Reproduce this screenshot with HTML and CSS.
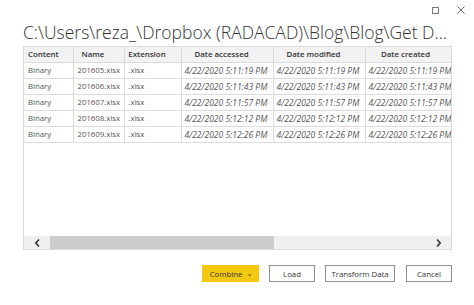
FILE: index.html
```html
<!DOCTYPE html>
<html lang="en">
<head>
    <meta charset="UTF-8">
    <meta name="viewport" content="width=device-width, initial-scale=1.0">
    <title>Navigator - Folder</title>
    <link rel="stylesheet" href="styles.css">
</head>
<body>
    <div class="dialog">
        <div class="window-controls">
            <span class="ctl-max"></span>
            <svg class="ctl-close" width="8" height="8" viewBox="0 0 8 8"><path d="M0.5 0.5 L7.5 7.5 M7.5 0.5 L0.5 7.5" stroke="#666" stroke-width="1"/></svg>
        </div>

        <h1 class="path">C:\Users\reza_\Dropbox (RADACAD)\Blog\Blog\Get D...</h1>

        <div class="grid">
            <div class="grid-body">
                <table>
                    <colgroup>
                        <col class="c-content">
                        <col class="c-name">
                        <col class="c-ext">
                        <col class="c-date">
                        <col class="c-date">
                        <col class="c-date">
                    </colgroup>
                    <thead>
                        <tr>
                            <th class="first">Content</th>
                            <th>Name</th>
                            <th>Extension</th>
                            <th>Date accessed</th>
                            <th>Date modified</th>
                            <th>Date created</th>
                        </tr>
                    </thead>
                    <tbody>
                        <tr>
                            <td>Binary</td><td>201605.xlsx</td><td>.xlsx</td>
                            <td class="date">4/22/2020 5:11:19 PM</td>
                            <td class="date">4/22/2020 5:11:19 PM</td>
                            <td class="date">4/22/2020 5:11:19 PM</td>
                        </tr>
                        <tr>
                            <td>Binary</td><td>201606.xlsx</td><td>.xlsx</td>
                            <td class="date">4/22/2020 5:11:43 PM</td>
                            <td class="date">4/22/2020 5:11:43 PM</td>
                            <td class="date">4/22/2020 5:11:43 PM</td>
                        </tr>
                        <tr>
                            <td>Binary</td><td>201607.xlsx</td><td>.xlsx</td>
                            <td class="date">4/22/2020 5:11:57 PM</td>
                            <td class="date">4/22/2020 5:11:57 PM</td>
                            <td class="date">4/22/2020 5:11:57 PM</td>
                        </tr>
                        <tr>
                            <td>Binary</td><td>201608.xlsx</td><td>.xlsx</td>
                            <td class="date">4/22/2020 5:12:12 PM</td>
                            <td class="date">4/22/2020 5:12:12 PM</td>
                            <td class="date">4/22/2020 5:12:12 PM</td>
                        </tr>
                        <tr>
                            <td>Binary</td><td>201609.xlsx</td><td>.xlsx</td>
                            <td class="date">4/22/2020 5:12:26 PM</td>
                            <td class="date">4/22/2020 5:12:26 PM</td>
                            <td class="date">4/22/2020 5:12:26 PM</td>
                        </tr>
                    </tbody>
                </table>
            </div>

            <div class="hscroll">
                <span class="arrow">
                    <svg width="7" height="8" viewBox="0 0 7 8"><path d="M5 0.5 L1.8 4 L5 7.5" fill="none" stroke="#333" stroke-width="1.6"/></svg>
                </span>
                <div class="track"><div class="thumb"></div></div>
                <span class="arrow">
                    <svg width="7" height="8" viewBox="0 0 7 8"><path d="M2 0.5 L5.2 4 L2 7.5" fill="none" stroke="#333" stroke-width="1.6"/></svg>
                </span>
            </div>
        </div>

        <div class="actions">
            <button class="btn primary">Combine <span class="caret">&#9662;</span></button>
            <button class="btn">Load</button>
            <button class="btn wide">Transform Data</button>
            <button class="btn">Cancel</button>
        </div>
    </div>
</body>
</html>
```

FILE: styles.css
```css
* { margin: 0; padding: 0; box-sizing: border-box; }
body {
    font-family: "Open Sans", "Noto Sans", sans-serif;
    background: white; color: #333;
}
.dialog { width: 474px; height: 305px; padding: 6px 0 0 23px; }

.window-controls {
    display: flex; justify-content: flex-end; align-items: center;
    gap: 18px; height: 8px; padding-right: 9px;
}
.ctl-max { width: 7px; height: 7px; border: 1px solid #777; }
.ctl-close { display: block; }

.path {
    font-size: 17.5px; font-weight: 300; color: #333;
    white-space: nowrap; width: 430px; overflow: hidden;
    line-height: 22px; margin-top: 7px;
}

.grid {
    width: 429px; height: 204px; margin-top: 3px;
    border: 1px solid #dadada;
    display: flex; flex-direction: column;
}
.grid-body { flex: 1; overflow: hidden; }

table { border-collapse: collapse; table-layout: fixed; width: 432px; }
.c-content { width: 49px; }
.c-name { width: 51px; }
.c-ext { width: 57px; }
.c-date { width: 92px; }

th, td {
    white-space: nowrap; overflow: hidden;
    border-right: 1px solid #dcdcdc; border-bottom: 1px solid #dcdcdc;
}
th {
    height: 15px; background: #f2f2f2; font-weight: 600; font-size: 7.9px;
    text-align: center; padding-right: 11px; color: #333;
}
th.first { text-align: left; padding-left: 4px; }
td { height: 16px; padding-left: 4px; color: #555; font-size: 7.8px; }
td.date { font-style: italic; padding-left: 3px; font-size: 8.5px; }

.hscroll {
    height: 13px; background: #f0f0f0;
    display: flex; align-items: center;
}
.arrow { width: 26px; display: flex; justify-content: center; }
.track { flex: 1; height: 100%; }
.thumb { width: 224px; height: 100%; background: #cdcdcd; }

.actions {
    display: flex; justify-content: flex-end; gap: 10px;
    width: 429px; margin-top: 15px;
}
.btn {
    font-family: inherit; font-size: 7.8px; color: #333;
    height: 17px; width: 46px; background: white;
    border: 1px solid #8f8f8f; cursor: pointer;
}
.btn.wide { width: 70px; margin-right: 1px; }
.btn.primary { width: 57px; background: #f2c811; border-color: #f2c811; }
.caret { font-size: 6px; color: #8a7a30; margin-left: 4px; }
```
